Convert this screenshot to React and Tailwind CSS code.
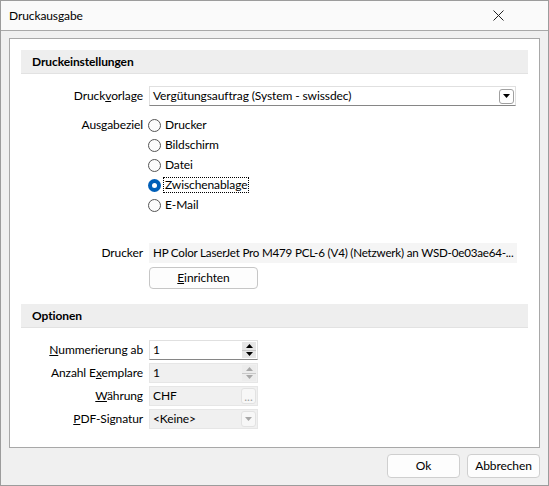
import React from 'react';

const Row = ({ label, children, className = '' }) => (
  <div className={`flex items-center ${className}`}>
    <div className="w-[133px] text-right whitespace-nowrap">{label}</div>
    <div className="ml-[6px]">{children}</div>
  </div>
);

const Section = ({ title, className = '' }) => (
  <div className={`mx-[11px] h-[24px] bg-[#eeeeee] border-b border-[#e2e2e2] flex items-center pl-[11px] font-bold ${className}`}>
    {title}
  </div>
);

const Radio = ({ label, checked, focused }) => (
  <div className="flex items-center h-[20px]">
    {checked ? (
      <span className="w-[13px] h-[13px] rounded-full bg-[#005fb8] flex items-center justify-center">
        <span className="w-[5px] h-[5px] rounded-full bg-white" />
      </span>
    ) : (
      <span className="w-[13px] h-[13px] rounded-full border border-[#555] bg-[#fbfbfb]" />
    )}
    <span className={`ml-[3px] px-[1px] leading-[14px] ${focused ? 'outline outline-1 outline-dotted outline-black' : ''}`}>{label}</span>
  </div>
);

const Triangle = ({ up, color = '#000' }) => (
  <svg width="7" height="4" viewBox="0 0 7 4">
    <path d={up ? 'M0 4 L3.5 0 L7 4 Z' : 'M0 0 L3.5 4 L7 0 Z'} fill={color} />
  </svg>
);

const Spinner = ({ disabled }) => {
  const c = disabled ? '#a8a8a8' : '#000';
  return (
    <div className="flex flex-col w-[14px] h-[16px] mr-[1px]">
      <div className={`flex-1 flex items-center justify-center border-b border-[#c8c8c8] ${disabled ? 'bg-[#ececec]' : 'bg-[#e6e6e6]'}`}>
        <Triangle up color={c} />
      </div>
      <div className={`flex-1 flex items-center justify-center ${disabled ? 'bg-[#ececec]' : 'bg-[#e6e6e6]'}`}>
        <Triangle color={c} />
      </div>
    </div>
  );
};

const App = () => {
  return (
    <div className="w-[549px] h-[486px] border border-[#9c9c9c] bg-[#f0f0f0] flex flex-col text-[12px] tracking-[-0.1px] text-black font-['Lato',sans-serif] overflow-hidden">
      <div className="h-[30px] shrink-0 bg-[#fafafa] border-b border-[#a8a8a8] flex items-center justify-between pl-[8px] pr-[44px]">
        <span>Druckausgabe</span>
        <svg width="11" height="11" viewBox="0 0 11 11">
          <path d="M0.5 0.5 L10.5 10.5 M10.5 0.5 L0.5 10.5" stroke="#222" strokeWidth="1" />
        </svg>
      </div>

      <div className="flex-1 flex flex-col px-[8px] pt-[7px]">
        <div className="h-[410px] bg-white border border-[#a8a8a8] pt-[11px]">
          <Section title="Druckeinstellungen" />

          <Row label={<>Druck<u>v</u>orlage</>} className="mt-[12px]">
            <div className="w-[367px] h-[20px] border border-[#e0e0e0] border-b-[#868686] flex items-center justify-between pl-[3px] pr-[1px]">
              <span>Vergütungsauftrag (System - swissdec)</span>
              <span className="w-[15px] h-[15px] rounded-[3px] border border-[#a0a0a0] bg-white flex items-center justify-center">
                <Triangle />
              </span>
            </div>
          </Row>

          <div className="flex mt-[9px]">
            <div className="w-[133px] h-[20px] flex items-center justify-end">Ausgabeziel</div>
            <div className="ml-[5px] flex flex-col">
              <Radio label="Drucker" />
              <Radio label="Bildschirm" />
              <Radio label="Datei" />
              <Radio label="Zwischenablage" checked focused />
              <Radio label="E-Mail" />
            </div>
          </div>

          <Row label="Drucker" className="mt-[28px]">
            <div className="w-[368px] h-[20px] bg-[#f5f5f5] flex items-center pl-[4px] whitespace-nowrap text-[11.6px] tracking-[-0.2px]">
              HP Color LaserJet Pro M479 PCL-6 (V4) (Netzwerk) an WSD-0e03ae64-...
            </div>
          </Row>

          <div className="ml-[139px] mt-[4px] w-[109px] h-[22px] rounded-[4px] border border-[#c6c6c6] bg-[#fdfdfd] flex items-center justify-center">
            <span><u>E</u>inrichten</span>
          </div>

          <Section title="Optionen" className="mt-[15px]" />

          <div className="flex flex-col gap-[3px] mt-[12px]">
            <Row label={<><u>N</u>ummerierung ab</>}>
              <div className="w-[109px] h-[20px] border border-[#e0e0e0] border-b-[#868686] bg-white flex items-center justify-between pl-[3px]">
                <span>1</span>
                <Spinner />
              </div>
            </Row>
            <Row label={<>Anzahl E<u>x</u>emplare</>}>
              <div className="w-[109px] h-[20px] border border-[#e6e6e6] bg-[#f0f0f0] flex items-center justify-between pl-[3px]">
                <span>1</span>
                <Spinner disabled />
              </div>
            </Row>
            <Row label={<><u>W</u>ährung</>}>
              <div className="w-[109px] h-[20px] border border-[#e6e6e6] bg-[#f0f0f0] flex items-center justify-between pl-[3px] pr-[1px]">
                <span>CHF</span>
                <span className="w-[15px] h-[16px] rounded-[3px] border border-[#e2e2e2] bg-[#f7f7f7] flex items-end justify-center pb-[2px] text-[#a0a0a0] leading-[8px] tracking-[0px]">...</span>
              </div>
            </Row>
            <Row label={<><u>P</u>DF-Signatur</>}>
              <div className="w-[109px] h-[20px] border border-[#e6e6e6] bg-[#f0f0f0] flex items-center justify-between pl-[3px] pr-[1px]">
                <span>&lt;Keine&gt;</span>
                <span className="w-[15px] h-[16px] rounded-[3px] border border-[#e2e2e2] bg-[#f7f7f7] flex items-center justify-center">
                  <Triangle color="#a8a8a8" />
                </span>
              </div>
            </Row>
          </div>
        </div>

        <div className="flex justify-end gap-[7px] mt-[6px]">
          <button className="w-[73px] h-[24px] rounded-[4px] border border-[#cfcfcf] bg-[#fdfdfd]">Ok</button>
          <button className="w-[73px] h-[24px] rounded-[4px] border border-[#cfcfcf] bg-[#fdfdfd]">Abbrechen</button>
        </div>
      </div>
    </div>
  );
};

export default App;
